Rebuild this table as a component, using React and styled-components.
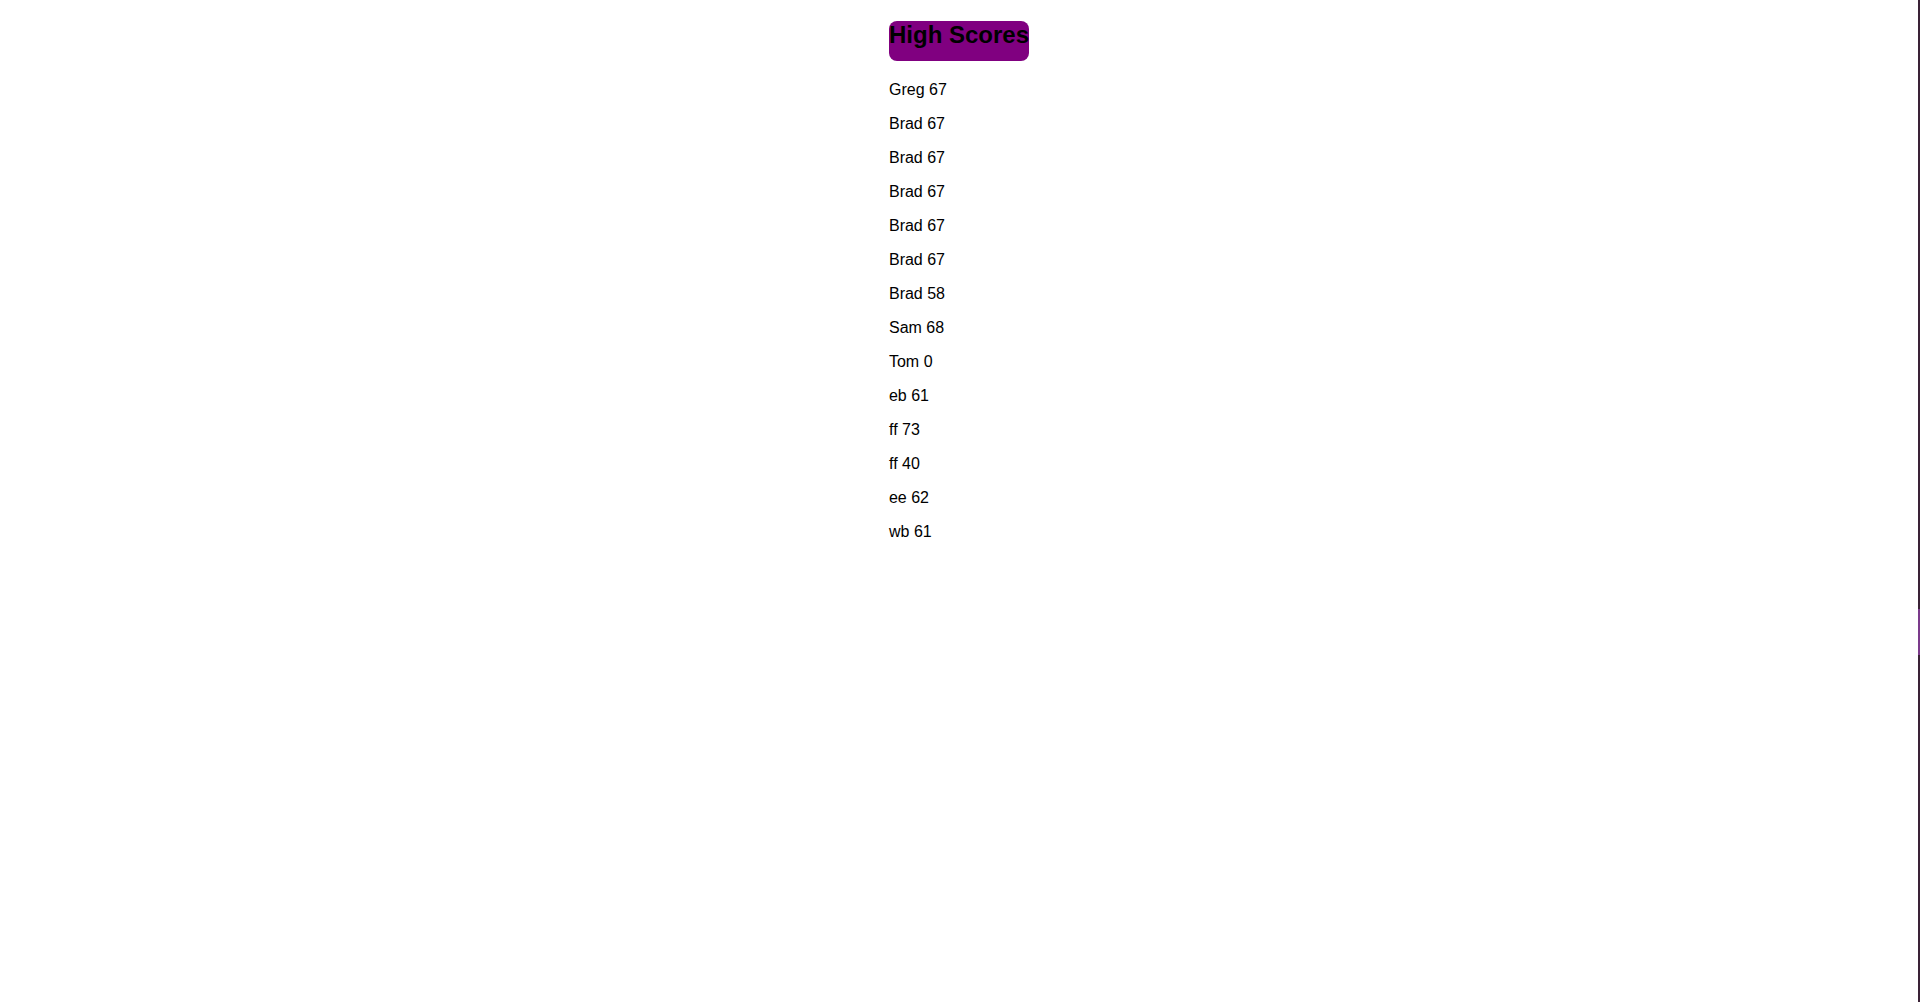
import styled, { createGlobalStyle } from "styled-components";

const scores = [
  { name: "Greg", score: 67 },
  { name: "Brad", score: 67 },
  { name: "Brad", score: 67 },
  { name: "Brad", score: 67 },
  { name: "Brad", score: 67 },
  { name: "Brad", score: 67 },
  { name: "Brad", score: 58 },
  { name: "Sam", score: 68 },
  { name: "Tom", score: 0 },
  { name: "eb", score: 61 },
  { name: "ff", score: 73 },
  { name: "ff", score: 40 },
  { name: "ee", score: 62 },
  { name: "wb", score: 61 },
];

export default function App() {
  return (
    <>
      <GlobalStyle />
      <Page>
        <Main>
          <Board>
            <Title>High Scores</Title>
            <List>
              {scores.map((s, i) => (
                <Row key={i}>
                  {s.name} {s.score}
                </Row>
              ))}
            </List>
          </Board>
        </Main>
        <Rail>
          <RailThumb />
        </Rail>
      </Page>
    </>
  );
}

const GlobalStyle = createGlobalStyle`
  html, body {
    margin: 0;
    padding: 0;
    background: #fff;
    font-family: Arial, "Liberation Sans", sans-serif;
    color: #000;
  }
`;

const Page = styled.div`
  display: flex;
  height: 100vh;
  overflow: hidden;
`;

const Main = styled.main`
  flex: 1;
  display: flex;
  justify-content: center;
  padding-top: 21px;
`;

const Board = styled.section`
  display: flex;
  flex-direction: column;
  align-items: flex-start;
  width: fit-content;
`;

const Title = styled.h2`
  margin: 0 0 20px;
  padding: 0 0 12px;
  font-size: 24px;
  line-height: 28px;
  font-weight: bold;
  background: #800080;
  color: #000;
  border-radius: 8px;
`;

const List = styled.div`
  display: flex;
  flex-direction: column;
  gap: 16px;
`;

const Row = styled.p`
  margin: 0;
  font-size: 16px;
  line-height: 18px;
`;

const Rail = styled.div`
  width: 2px;
  display: flex;
  flex-direction: column;
  padding-top: 609px;
  background: #3a2236;
`;

const RailThumb = styled.div`
  height: 46px;
  background: #7b3a8b;
`;
